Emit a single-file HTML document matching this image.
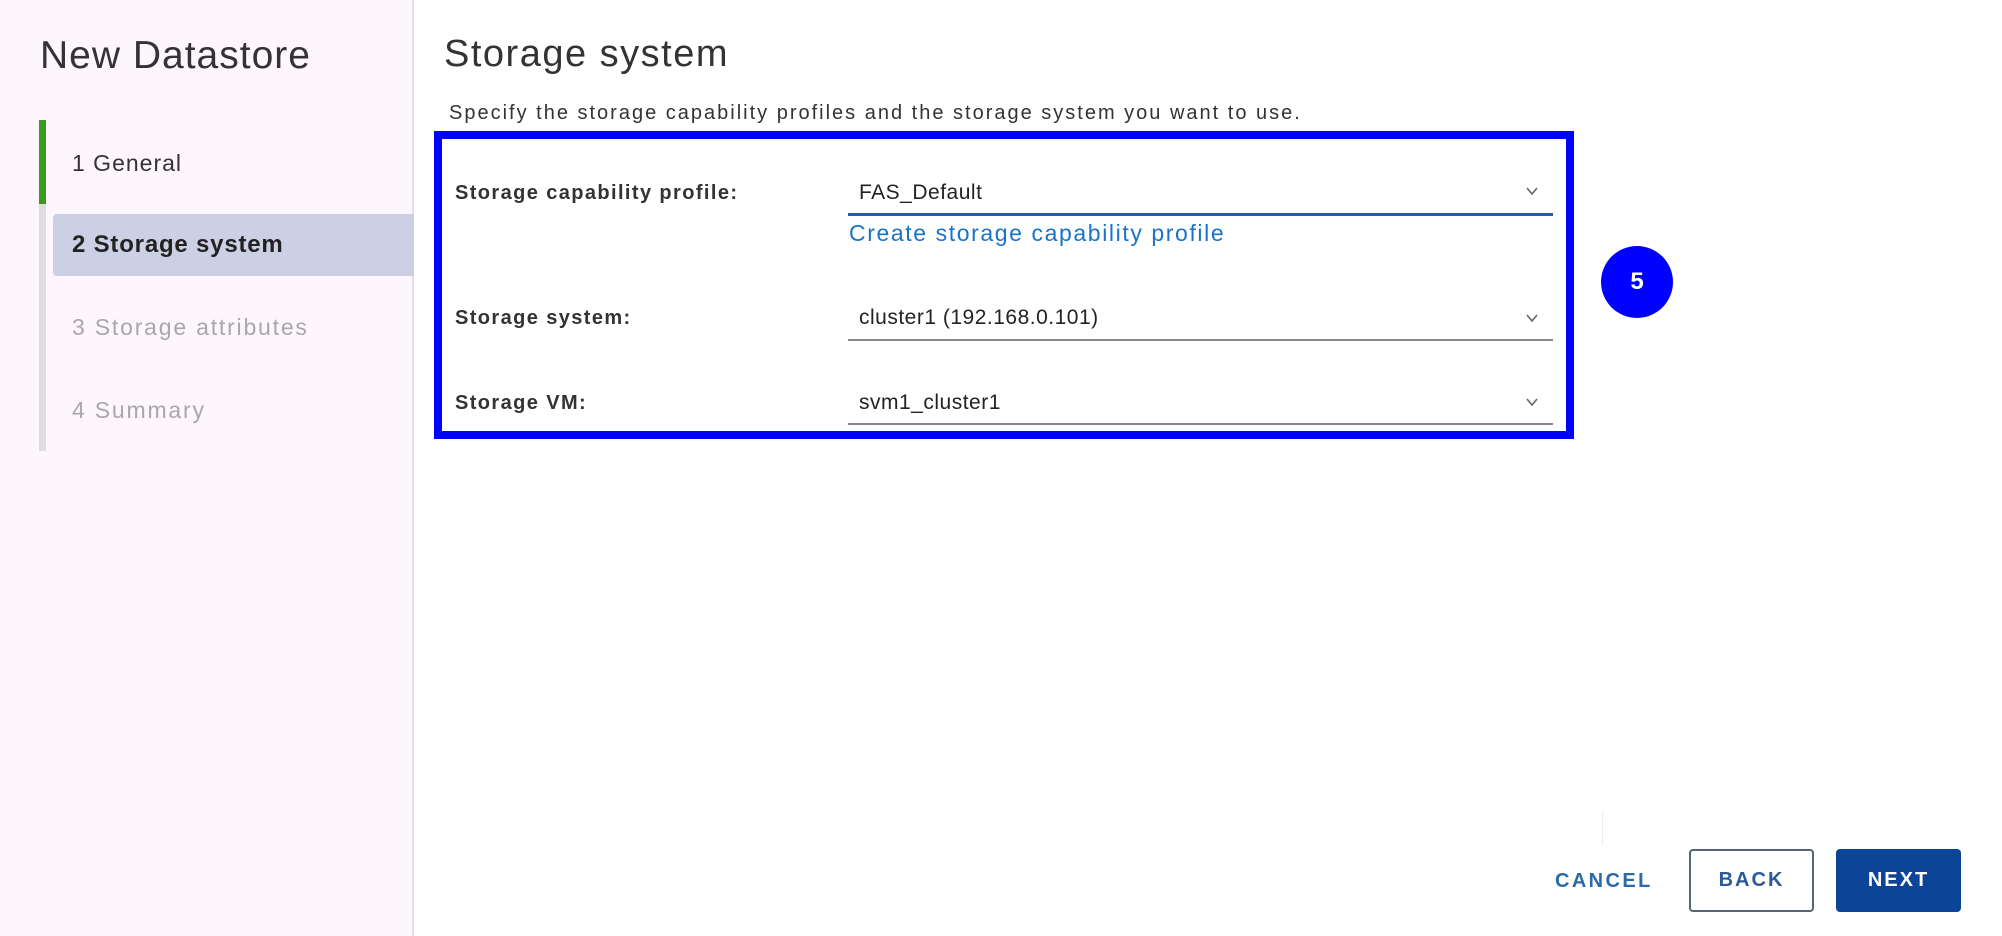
<!DOCTYPE html>
<html><head><meta charset="utf-8"><style>
*{margin:0;padding:0;box-sizing:border-box}
body{width:2002px;height:936px;background:#fff;font-family:"Liberation Sans",sans-serif;position:relative;overflow:hidden;color:#333}
.left{position:absolute;left:0;top:0;width:414px;height:936px;background:#fdf6fc;border-right:2px solid #e4e0e4}
.t{position:absolute;white-space:nowrap}
.sel{position:absolute;left:848px;width:705px;border-bottom:2px solid #888}
.chev{position:absolute;left:1525px;width:14px;height:14px}
.lb{font-size:20px;font-weight:bold;color:#333;letter-spacing:1.4px}
.v{font-size:21px;color:#222;letter-spacing:0.5px}
</style></head><body>
<div class="left"></div>
<div class="t" style="left:40px;top:34px;font-size:39px;color:#333;letter-spacing:1px">New Datastore</div>
<div style="position:absolute;left:39px;top:120px;width:7px;height:331px;background:#ddd"></div>
<div style="position:absolute;left:39px;top:120px;width:7px;height:84px;background:#3a9a1e"></div>
<div class="t" style="left:72px;top:150px;font-size:23px;color:#333;letter-spacing:1px">1 General</div>
<div style="position:absolute;left:53px;top:214px;width:361px;height:62px;background:#ccd0e4;border-radius:4px 0 0 4px"></div>
<div class="t" style="left:72px;top:231px;font-size:24px;color:#222;font-weight:bold;letter-spacing:0.8px">2 Storage system</div>
<div class="t" style="left:72px;top:314px;font-size:23px;color:#a8a8a8;letter-spacing:1.8px">3 Storage attributes</div>
<div class="t" style="left:72px;top:397px;font-size:23px;color:#a8a8a8;letter-spacing:1.8px">4 Summary</div>

<div class="t" style="left:444px;top:33px;font-size:38px;color:#333;letter-spacing:1.5px">Storage system</div>
<div class="t" style="left:449px;top:102px;font-size:20px;color:#333;letter-spacing:2px">Specify the storage capability profiles and the storage system you want to use.</div>

<div style="position:absolute;left:434px;top:131px;width:1140px;height:308px;border:8px solid #0000ff"></div>
<div class="t lb" style="left:455px;top:182px">Storage capability profile:</div>
<div class="t lb" style="left:455px;top:307px">Storage system:</div>
<div class="t lb" style="left:455px;top:392px">Storage VM:</div>

<div class="sel" style="top:178px;height:38px;border-bottom:3px solid #1f5fa8"></div>
<div class="t v" style="left:859px;top:181px">FAS_Default</div>
<div class="t" style="left:849px;top:220px;font-size:23px;color:#1a73c8;letter-spacing:1.6px">Create storage capability profile</div>
<div class="sel" style="top:304px;height:37px"></div>
<div class="t v" style="left:859px;top:306px">cluster1 (192.168.0.101)</div>
<div class="sel" style="top:388px;height:37px"></div>
<div class="t v" style="left:859px;top:391px">svm1_cluster1</div>
<svg class="chev" style="top:184px" viewBox="0 0 14 14"><path d="M2 4l5 6 5-6" fill="none" stroke="#666" stroke-width="1.6"/></svg>
<svg class="chev" style="top:311px" viewBox="0 0 14 14"><path d="M2 4l5 6 5-6" fill="none" stroke="#666" stroke-width="1.6"/></svg>
<svg class="chev" style="top:395px" viewBox="0 0 14 14"><path d="M2 4l5 6 5-6" fill="none" stroke="#666" stroke-width="1.6"/></svg>

<div style="position:absolute;left:1601px;top:246px;width:72px;height:72px;border-radius:50%;background:#0000ff;color:#fff;font-weight:bold;font-size:24px;text-align:center;line-height:72px">5</div>

<div style="position:absolute;left:1602px;top:812px;width:1px;height:33px;background:#eee"></div>
<div class="t" style="left:1555px;top:870px;font-size:20px;font-weight:bold;color:#2a6aa8;letter-spacing:2.4px">CANCEL</div>
<div style="position:absolute;left:1689px;top:849px;width:125px;height:63px;border:2px solid #55667a;border-radius:4px;color:#2a5a98;font-weight:bold;font-size:20px;letter-spacing:2px;text-align:center;line-height:59px">BACK</div>
<div style="position:absolute;left:1836px;top:849px;width:125px;height:63px;background:#0c4597;border-radius:4px;color:#fff;font-weight:bold;font-size:20px;letter-spacing:2px;text-align:center;line-height:63px">NEXT</div>
</body></html>
